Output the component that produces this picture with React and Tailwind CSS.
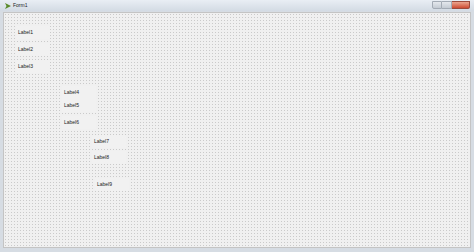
import React from "react";

const labels = [
  { name: "Label1", x: 12, y: 13 },
  { name: "Label2", x: 12, y: 30 },
  { name: "Label3", x: 12, y: 47 },
  { name: "Label4", x: 58, y: 73 },
  { name: "Label5", x: 58, y: 86 },
  { name: "Label6", x: 58, y: 103 },
  { name: "Label7", x: 88, y: 122 },
  { name: "Label8", x: 88, y: 138 },
  { name: "Label9", x: 91, y: 165 },
];

function App() {
  return (
    <div
      className="w-[474px] h-[252px] flex flex-col bg-[#dfe5ec] overflow-hidden"
      style={{ fontFamily: '"Liberation Sans", Arial, sans-serif' }}
    >
      {/* title bar */}
      <div className="h-[11px] flex items-center bg-gradient-to-b from-[#e9eef4] to-[#d3dbe4] pl-[5px] pr-[4px]">
        <svg width="6" height="6" viewBox="0 0 6 6">
          <path d="M0 0 L6 3 L0 6 L1.5 3 Z" fill="#5a8a2a" />
        </svg>
        <span className="ml-[2px] text-[5px] leading-none text-[#222]">Form1</span>
        <div className="ml-auto flex h-[8px] self-start mt-[1px]">
          <div className="w-[10px] bg-gradient-to-b from-[#e4e8ed] to-[#c4cbd3] border border-[#a3abb5] rounded-bl-[2px]" />
          <div className="w-[10px] bg-gradient-to-b from-[#e4e8ed] to-[#c4cbd3] border-y border-r border-[#a3abb5]" />
          <div className="w-[18px] bg-gradient-to-b from-[#eaa48e] to-[#cc4a32] border-y border-r border-[#9a4a3c] rounded-br-[2px]" />
        </div>
      </div>
      {/* frame */}
      <div className="flex-1 flex px-[3px] pb-[4px] pt-[1px] bg-[#d6dce3]">
        <div className="flex-1 border-l border-[#9a9a9a] border-t border-[#b8bec6] border-r border-b border-[#c4c4c4] bg-[#f0f0f0] bg-[radial-gradient(#cacaca_0.7px,transparent_0.8px)] bg-[size:3px_3px] relative">
          {labels.map((l) => (
            <div
              key={l.name}
              className="absolute w-[34px] h-[13px] bg-[#f1f1f1] text-[5px] leading-none text-[#1a1a1a] pl-[2px] pt-[4px]"
              style={{ left: l.x, top: l.y }}
            >
              {l.name}
            </div>
          ))}
        </div>
      </div>
    </div>
  );
}

export default App;
